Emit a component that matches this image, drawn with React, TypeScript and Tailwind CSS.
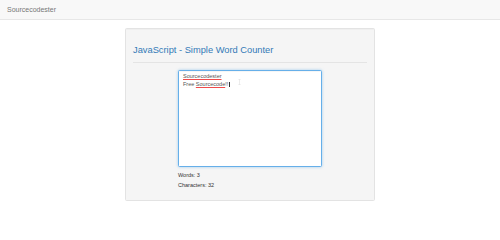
import React from 'react';

export default function App() {
  const text = 'Sourcecodester\nFree Sourcecode!!';
  const words = text.trim().split(/\s+/).length;
  const chars = text.length;

  return (
    <div className="min-h-screen bg-white font-['Liberation_Sans',Arial,sans-serif] text-[5.5px] leading-[1.42857] text-[#333]">
      {/* Navbar */}
      <nav className="h-[20px] bg-[#f8f8f8] border-b border-[#e7e7e7] flex items-center px-[7px]">
        <span className="text-[7px] text-[#777]">Sourcecodester</span>
      </nav>

      {/* Well */}
      <div className="w-[250px] mx-auto mt-[8px] bg-[#f5f5f5] border border-[#e3e3e3] rounded-[1.5px] shadow-[inset_0_0.4px_0.4px_rgba(0,0,0,0.05)] p-[7px] h-[173px]">
        <h3 className="mt-[9px] mb-[3.7px] text-[9.3px] leading-[1.1] text-[#337ab7]">
          JavaScript - Simple Word Counter
        </h3>
        <hr className="mt-[7.2px] mb-[6.5px] border-0 border-t border-[#e4e4e4]" />

        <div className="w-[144px] mx-auto">
          <div className="relative h-[97px] bg-white border border-[#66afe9] rounded-[1.5px] shadow-[inset_0_0.4px_0.4px_rgba(0,0,0,0.075),0_0_3px_rgba(102,175,233,0.6)] px-[4px] py-[2px] text-[#555]">
            <div>
              <span className="underline decoration-[#ef4b4b] decoration-[0.5px] underline-offset-[0.8px]">Sourcecodester</span>
            </div>
            <div className="flex items-center">
              <span>Free&nbsp;</span>
              <span className="underline decoration-[#ef4b4b] decoration-[0.5px] underline-offset-[0.8px]">Sourcecode</span>
              <span>!!</span>
              <span className="inline-block w-[0.4px] h-[5.5px] bg-[#333] ml-[0.3px]" />
            </div>
            <svg className="absolute left-[59px] top-[8px]" width="3" height="6" viewBox="0 0 3 6" fill="none">
              <path d="M0.3 0.3h2.4M1.5 0.3v5.4M0.3 5.7h2.4" stroke="#d0d0d0" strokeWidth="0.4" />
            </svg>
          </div>

          <div className="mt-[5.4px] flex flex-col gap-[2.1px]">
            <div>Words: {words}</div>
            <div>Characters: {chars}</div>
          </div>
        </div>
      </div>
    </div>
  );
}
